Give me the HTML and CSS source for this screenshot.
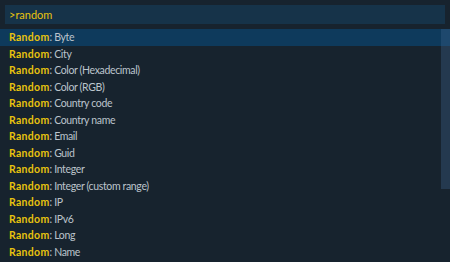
FILE: index.html
```html
<!DOCTYPE html>
<html>
<head>
<meta charset="utf-8">
<link rel="stylesheet" href="styles.css">
</head>
<body>
<div class="palette">
  <div class="input-wrap">
    <div class="input">&gt;random</div>
  </div>
  <div class="list">
    <div class="rows">
      <div class="row selected"><b>Random</b><span>: Byte</span></div>
      <div class="row"><b>Random</b><span>: City</span></div>
      <div class="row"><b>Random</b><span>: Color (Hexadecimal)</span></div>
      <div class="row"><b>Random</b><span>: Color (RGB)</span></div>
      <div class="row"><b>Random</b><span>: Country code</span></div>
      <div class="row"><b>Random</b><span>: Country name</span></div>
      <div class="row"><b>Random</b><span>: Email</span></div>
      <div class="row"><b>Random</b><span>: Guid</span></div>
      <div class="row"><b>Random</b><span>: Integer</span></div>
      <div class="row"><b>Random</b><span>: Integer (custom range)</span></div>
      <div class="row"><b>Random</b><span>: IP</span></div>
      <div class="row"><b>Random</b><span>: IPv6</span></div>
      <div class="row"><b>Random</b><span>: Long</span></div>
      <div class="row"><b>Random</b><span>: Name</span></div>
    </div>
    <div class="scrollbar"></div>
  </div>
</div>
</body>
</html>
```
FILE: styles.css
```css
html, body {
  margin: 0;
  padding: 0;
  background: #17232e;
  width: 450px;
  height: 262px;
  overflow: hidden;
}
.palette {
  font-family: Lato, Roboto, sans-serif;
  font-size: 10px;
  color: #bcc4cc;
}
.input-wrap {
  padding: 5px;
}
.input {
  height: 19px;
  line-height: 20px;
  background: #163349;
  color: #e8c20e;
  padding-left: 4px;
  box-sizing: border-box;
  font-size: 11px;
}
.list {
  position: relative;
  height: 233px;
  overflow: hidden;
}
.row {
  box-sizing: border-box;
  height: 16.5px;
  line-height: 16px;
  padding-left: 9px;
  white-space: nowrap;
  font-size: 10.5px;
}
.row b {
  color: #e8c20e;
  font-weight: 700;
  letter-spacing: 0.3px;
}
.row span {
  font-size: 10.5px;
  letter-spacing: -0.35px;
}
.row.selected {
  background: #0e3a5c;
}
.scrollbar {
  position: absolute;
  right: 0;
  top: 0;
  width: 9px;
  height: 160px;
  background: rgba(60, 100, 140, 0.35);
}
```
